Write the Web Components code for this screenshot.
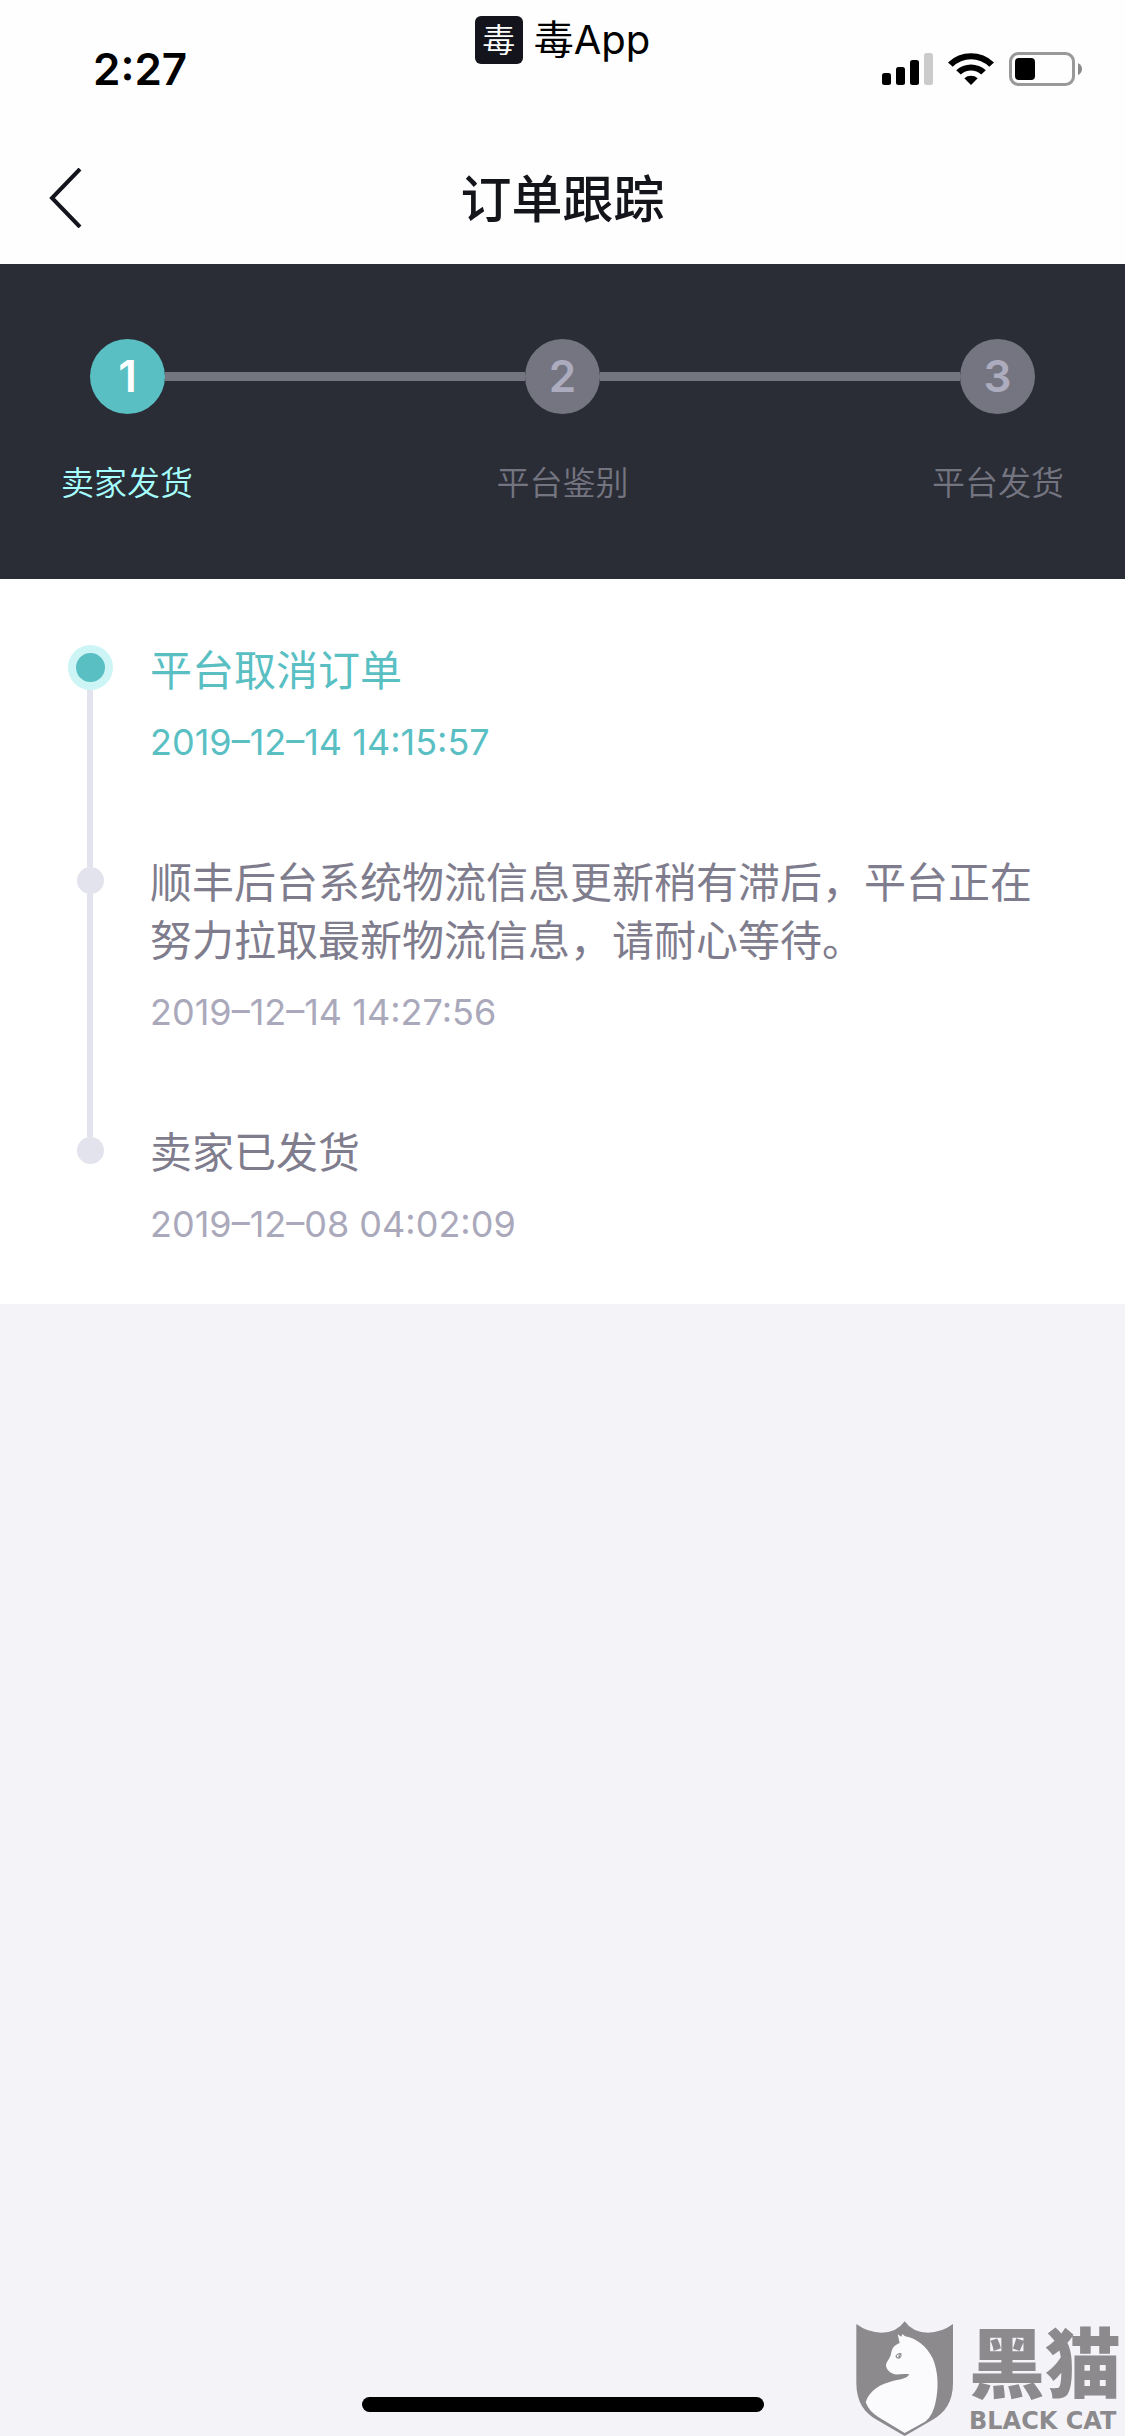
<!DOCTYPE html>
<html lang="zh-CN">
<head>
<meta charset="utf-8">
<meta name="viewport" content="width=device-width, initial-scale=1">
<title>订单跟踪</title>
<style>
  html, body { margin: 0; background: #f4f3f8; }
  body { font-family: Inter, "Noto Sans CJK SC", sans-serif; color: #14151a; }
</style>
</head>
<body>
<order-page>
  <status-bar slot="top" time="2:27" app="毒App" mark="毒"></status-bar>
  <nav-bar slot="top">订单跟踪</nav-bar>
  <step-progress current="1" steps="卖家发货,平台鉴别,平台发货"></step-progress>
  <track-list>
    <track-event state="active" time="2019–12–14 14:15:57">平台取消订单</track-event>
    <track-event time="2019–12–14 14:27:56">顺丰后台系统物流信息更新稍有滞后，平台正在努力拉取最新物流信息，请耐心等待。</track-event>
    <track-event state="last" time="2019–12–08 04:02:09">卖家已发货</track-event>
  </track-list>
  <black-cat-mark slot="over"></black-cat-mark>
</order-page>

<script>
class BaseElement extends HTMLElement {
  connectedCallback() {
    if (this.shadowRoot) return;
    this.attachShadow({ mode: 'open' }).innerHTML = this.render();
  }
  attr(name) { return this.getAttribute(name) || ''; }
}

customElements.define('order-page', class extends BaseElement {
  render() {
    return `
    <style>
      :host { display: flex; flex-direction: column; min-height: 100vh; position: relative; box-sizing: border-box; }
      header { background: #fefefe; }
      main { flex: 1; }
      footer { display: flex; justify-content: center; padding-bottom: 24px; }
      .home { width: 402px; height: 15px; border-radius: 8px; background: #000; }
    </style>
    <header><slot name="top"></slot></header>
    <main><slot></slot></main>
    <footer><div class="home"></div></footer>
    <slot name="over"></slot>`;
  }
});

customElements.define('status-bar', class extends BaseElement {
  render() {
    return `
    <style>
      :host { display: grid; grid-template-columns: 1fr auto 1fr; height: 132px; }
      .time { align-self: center; padding: 6px 0 0 93px; font-size: 44px; line-height: 56px; font-weight: 600; color: #000; }
      .app { display: flex; align-items: center; gap: 11px; height: 48px; padding-top: 16px; }
      .mark { display: flex; align-items: center; justify-content: center; width: 48px; height: 48px; border-radius: 6px;
              background: #14151c; color: #fff; font-size: 33px; line-height: 48px; font-weight: 350; }
      .name { font-size: 40px; line-height: 48px; color: #000; }
      .icons { display: flex; align-items: center; justify-content: flex-end; padding: 6px 43px 0 0; }
      svg { display: block; }
    </style>
    <div class="time">${this.attr('time')}</div>
    <div class="app"><span class="mark">${this.attr('mark')}</span><span class="name">${this.attr('app')}</span></div>
    <div class="icons">
      <svg width="200" height="34" viewBox="0 0 200 34" aria-hidden="true">
        <rect x="0" y="21" width="9" height="12" rx="2.5"/>
        <rect x="14" y="15" width="9" height="18" rx="2.5"/>
        <rect x="28" y="8" width="9" height="25" rx="2.5"/>
        <rect x="42" y="1" width="9" height="32" rx="2.5" fill="#cbcbcb"/>
        <path d="M66 10.500A33 33 0 0 1 112 10.500L107.300 14.800A26 26 0 0 0 70.700 14.800Z"/>
        <path d="M74.200 18.300A21.500 21.500 0 0 1 103.800 18.300L99.200 22.500A15 15 0 0 0 78.800 22.500Z"/>
        <path d="M82.300 26.200A10.500 10.500 0 0 1 95.700 26.200L89 33Z"/>
        <rect x="128.500" y="1.500" width="63" height="31" rx="8" fill="none" stroke="#999" stroke-width="3"/>
        <rect x="133" y="6" width="20" height="22" rx="4"/>
        <path d="M196 11Q200 13 200 17T196 23Z" fill="#8a8a8a"/>
      </svg>
    </div>`;
  }
});

customElements.define('nav-bar', class extends BaseElement {
  render() {
    return `
    <style>
      :host { display: grid; grid-template-columns: 1fr auto 1fr; align-items: center; height: 132px; }
      button { justify-self: start; margin: 0; padding: 0 48px; border: 0; background: none; height: 132px; }
      svg { display: block; }
      h1 { margin: 0; padding-top: 4px; font-size: 51px; line-height: 72px; font-weight: 500; color: #14151a; }
    </style>
    <button type="button" aria-label="返回">
      <svg width="34" height="60" viewBox="0 0 34 60" fill="none" stroke="#14151c" stroke-width="4"><path d="M32 1L4 30L32 59"/></svg>
    </button>
    <h1><slot></slot></h1>`;
  }
});

customElements.define('step-progress', class extends BaseElement {
  render() {
    const current = Number(this.attr('current'));
    const steps = this.attr('steps').split(',');
    const cls = i => i + 1 === current ? ' on' : '';
    const dots = steps.map((s, i) => `<span class="dot${cls(i)}">${i + 1}</span>`).join('<i></i>');
    const labels = steps.map((s, i) => `<span class="label${cls(i)}">${s}</span>`).join('');
    return `
    <style>
      :host { display: block; background: #2b2d36; padding: 75px 0 72px; }
      .track { display: flex; align-items: center; padding: 0 90px; }
      i { flex: 1; height: 9px; background: #747581; }
      .dot { width: 75px; height: 75px; border-radius: 50%; background: #747581; color: #adacbf;
             text-align: center; font-size: 44px; line-height: 75px; font-weight: 600; }
      .dot.on { background: #59bfc3; color: #fff; }
      .labels { display: flex; justify-content: space-between; padding: 45px 61px 0; }
      .label { font-size: 33px; line-height: 48px; color: #747581; font-weight: 350; }
      .label.on { color: #a6ffff; }
    </style>
    <div class="track">${dots}</div>
    <div class="labels">${labels}</div>`;
  }
});

customElements.define('track-list', class extends BaseElement {
  render() {
    return `
    <style>
      :host { display: flex; flex-direction: column; background: #fff; padding: 63px 87px 55px 67px; }
    </style>
    <slot></slot>`;
  }
});

customElements.define('track-event', class extends BaseElement {
  render() {
    return `
    <style>
      :host { display: flex; gap: 37px; --rail: #e3e3ee; --text: #7f7d8d; --time: #aaa9bb; }
      :host([state="active"]) { --text: #59bfc3; --time: #59bfc3; }
      .rail { display: flex; flex-direction: column; align-items: center; width: 46px; }
      .top, .rest { width: 6px; background: var(--rail); }
      .top { height: 13px; }
      .rest { flex: 1; }
      .dot { box-sizing: border-box; width: 27px; height: 27px; border-radius: 50%; background: var(--rail); }
      :host([state="active"]) .top { height: 3px; background: none; }
      :host([state="active"]) .dot { width: 45px; height: 45px; border: 8px solid #cdf5f5; background: #59bfc3; }
      :host([state="last"]) .rest { background: none; }
      .body { flex: 1; display: flex; flex-direction: column; gap: 17px; padding-bottom: 87px; }
      :host([state="last"]) .body { padding-bottom: 0; }
      p { margin: 0; font-size: 42px; line-height: 58px; color: var(--text); }
      time { font-size: 36px; line-height: 50px; color: var(--time); }
    </style>
    <div class="rail"><div class="top"></div><div class="dot"></div><div class="rest"></div></div>
    <div class="body"><p><slot></slot></p><time>${this.attr('time')}</time></div>`;
  }
});

customElements.define('black-cat-mark', class extends BaseElement {
  render() {
    return `
    <style>
      :host { position: absolute; right: 0; bottom: 0; display: flex; align-items: flex-end; gap: 16px; color: #8c8a8d; }
      svg { display: block; }
      .words { display: flex; flex-direction: column; width: 156px; white-space: nowrap; }
      .cn { font-size: 76px; line-height: 84px; font-weight: 900; }
      .en { font-family: "DejaVu Sans", sans-serif; font-size: 24px; line-height: 30px; font-weight: 700; }
    </style>
    <svg width="97" height="115" viewBox="48 32 291 345" aria-hidden="true">
      <path fill="#8c8a8d" d="M49 41Q84 67 125 67Q170 67 194 33Q218 67 264 67Q304 67 339 41V218C339 275 314 308 278 328L194 377L110 328C74 308 49 275 49 218Z"/>
      <path fill="#fbfafc" d="M77 276C88 240 120 222 158 212C184 207 200 205 208 192C190 189 176 193 164 192C152 189 138 178 138 164C140 152 150 145 153 131C156 112 164 104 179 98L173 72L184 79L187 71L195 78C230 84 260 108 278 144C294 182 296 226 289 264C283 300 272 322 255 334L194 368L116 321C98 310 85 296 77 276Z"/>
      <path fill="#8c8a8d" d="M166 137Q173 126 184 129Q187 140 178 145Q169 147 166 137Z"/>
      <path fill="#fbfafc" d="M170 137Q174 131 176 131L175 142Q171 141 170 137ZM179 131Q184 134 180 141Z"/>
    </svg>
    <div class="words"><span class="cn">黑猫</span><span class="en">BLACK CAT</span></div>`;
  }
});
</script>
</body>
</html>
